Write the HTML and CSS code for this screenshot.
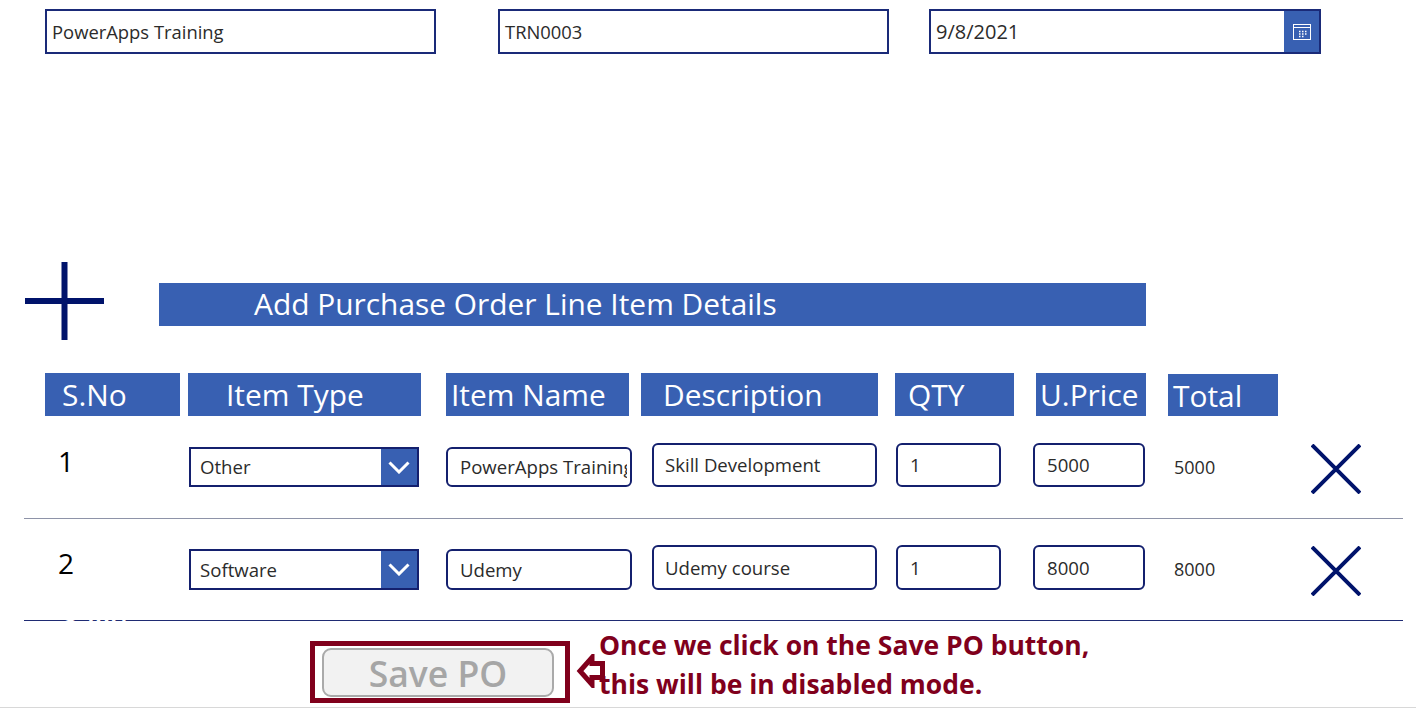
FILE: index.html
```html
<!DOCTYPE html>
<html lang="en">
<head>
<meta charset="UTF-8" />
<title>Purchase Order</title>
<link rel="stylesheet" href="styles.css">
</head>
<body>

<div class="top-row">
  <div class="field field-name">PowerApps Training</div>
  <div class="field field-code">TRN0003</div>
  <div class="field field-date">
    <span class="field-text">9/8/2021</span>
    <span class="date-btn">
      <svg width="18" height="16" viewBox="0 0 18 16" fill="none" stroke="#fff" stroke-width="1">
        <rect x="0.5" y="0.5" width="17" height="15" />
        <path d="M1 3.500h16" />
        <path stroke-width="1.500" d="M6 7.500h1.500M9 7.500h1.500M12 7.500h1.500M6 10h1.500M9 10h1.500M12 10h1.500M6 12.500h1.500M9 12.500h1.500" />
      </svg>
    </span>
  </div>
</div>

<div class="add-row">
  <svg class="plus" width="79" height="78" viewBox="0 0 79 78" fill="none" stroke="#00136b" stroke-width="6">
    <path d="M39.500 0v78M0 39h79" />
  </svg>
  <div class="add-title">Add Purchase Order Line Item Details</div>
</div>

<div class="head-row">
  <div class="head h-sno">S.No</div>
  <div class="head h-type">Item Type</div>
  <div class="head h-name">Item Name</div>
  <div class="head h-desc">Description</div>
  <div class="head h-qty">QTY</div>
  <div class="head h-price">U.Price</div>
  <div class="head h-total">Total</div>
</div>

<div class="line-row first">
  <div class="sno">1</div>
  <div class="select"><span class="select-text">Other</span><span class="select-btn"><svg width="22" height="13" viewBox="0 0 22 13" fill="none" stroke="#fff" stroke-width="3"><path d="M1.500 1.500l9.500 9.500 9.500-9.500" /></svg></span></div>
  <div class="input in-name"><span class="clip">PowerApps Training</span></div>
  <div class="input in-desc">Skill Development</div>
  <div class="input in-qty">1</div>
  <div class="input in-price">5000</div>
  <div class="total">5000</div>
  <svg class="remove" width="50" height="50" viewBox="0 0 50 50" fill="none" stroke="#00136b" stroke-width="4"><path d="M1 1l48 48M49 1L1 49" /></svg>
</div>

<div class="line-row second">
  <div class="sno">2</div>
  <div class="select"><span class="select-text">Software</span><span class="select-btn"><svg width="22" height="13" viewBox="0 0 22 13" fill="none" stroke="#fff" stroke-width="3"><path d="M1.500 1.500l9.500 9.500 9.500-9.500" /></svg></span></div>
  <div class="input in-name"><span class="clip">Udemy</span></div>
  <div class="input in-desc">Udemy course</div>
  <div class="input in-qty">1</div>
  <div class="input in-price">8000</div>
  <div class="total">8000</div>
  <svg class="remove" width="50" height="50" viewBox="0 0 50 50" fill="none" stroke="#00136b" stroke-width="4"><path d="M1 1l48 48M49 1L1 49" /></svg>
  <span class="ghost">Save</span>
</div>

<div class="save-row">
  <div class="save-box"><button class="save-btn" type="button" disabled>Save PO</button></div>
  <svg class="arrow" width="29" height="34" viewBox="0 0 29 34" fill="none" stroke="#80001c" stroke-width="5"><path d="M26.500 9.500H16V3.500L4 17l12 13.500V23.500h10.500z" /></svg>
  <p class="note">Once we click on the Save PO button,<br>this will be in disabled mode.</p>
</div>

</body>
</html>
```

FILE: styles.css
```css
html, body {
  height: 708px;
  overflow: hidden;
}

body {
  margin: 0;
  background-color: #fff;
  font-family: "Open Sans", sans-serif;
  color: #2b2b2b;
  box-sizing: border-box;
  border-bottom: 1px solid #d8d8d8;
}

/* top fields */
.top-row {
  display: flex;
  padding: 9px 0 0 45px;
}

.field {
  box-sizing: border-box;
  height: 45px;
  width: 391px;
  border: 2px solid #1a2a78;
  padding-left: 5px;
  font-size: 18.4px;
  line-height: 41px;
  white-space: nowrap;
}

.field-code {
  margin-left: 62px;
}

.field-date {
  margin-left: 40px;
  width: 392px;
  display: flex;
  justify-content: space-between;
  font-size: 20px;
}

.date-btn {
  width: 35px;
  background-color: #3860b2;
  display: flex;
  align-items: center;
  justify-content: center;
}

/* add line item */
.add-row {
  display: flex;
  align-items: flex-start;
  margin-top: 208px;
  padding-left: 25px;
}

.add-title {
  box-sizing: border-box;
  width: 987px;
  height: 43px;
  margin: 21px 0 0 55px;
  padding-left: 95px;
  background-color: #3860b2;
  color: #fff;
  font-size: 29.9px;
  line-height: 41px;
}

/* table header */
.head-row {
  display: flex;
  margin-top: 33px;
  padding-left: 45px;
}

.head {
  box-sizing: border-box;
  height: 43px;
  background-color: #3860b2;
  color: #fff;
  font-size: 29.9px;
  line-height: 43px;
  white-space: nowrap;
}

.h-sno { width: 135px; padding-left: 17px; }
.h-type { width: 233px; margin-left: 8px; padding-left: 38px; }
.h-name { width: 183px; margin-left: 25px; padding-left: 5px; }
.h-desc { width: 237px; margin-left: 12px; padding-left: 22px; }
.h-qty { width: 119px; margin-left: 17px; padding-left: 13px; }
.h-price { width: 110px; margin-left: 22px; padding-left: 4px; }
.h-total { width: 110px; height: 42px; margin: 1px 0 0 22px; padding-left: 5px; }

/* line items */
.line-row {
  position: relative;
  box-sizing: border-box;
  display: flex;
  align-items: flex-start;
  margin: 0 13px 0 24px;
  border-bottom: 1px solid #8e93a8;
}

.line-row.first {
  height: 103px;
  padding-top: 27px;
}

.line-row.second {
  height: 102px;
  padding-top: 26px;
  border-bottom-color: #1f2b73;
}

.sno {
  width: 165px;
  padding: 0 0 0 34px;
  box-sizing: border-box;
  color: #000;
  font-size: 28px;
  line-height: 37px;
}

.select {
  box-sizing: border-box;
  display: flex;
  width: 230px;
  height: 41px;
  margin-top: 4px;
  border: 2px solid #14206e;
  font-size: 18.6px;
  line-height: 38px;
}

.first .select {
  height: 40px;
  line-height: 36px;
}

.select-text {
  flex: 1;
  padding-left: 9px;
}

.select-btn {
  width: 36px;
  background-color: #3860b2;
  display: flex;
  align-items: center;
  justify-content: center;
}

.input {
  box-sizing: border-box;
  height: 45px;
  border: 2px solid #14206e;
  border-radius: 6px;
  font-size: 18.6px;
  line-height: 42px;
  white-space: nowrap;
}

.first .input {
  height: 44px;
  line-height: 40px;
}

.line-row .in-name {
  width: 186px;
  height: 41px;
  margin: 4px 0 0 27px;
  padding: 0 3px 0 12px;
  line-height: 38px;
}

.first .in-name {
  height: 40px;
  line-height: 36px;
}

.clip {
  display: block;
  overflow: hidden;
}

.in-desc { width: 225px; margin-left: 20px; padding-left: 11px; }
.in-qty { width: 105px; margin-left: 19px; padding-left: 12px; }
.in-price { width: 112px; margin-left: 32px; padding-left: 12px; }

.total {
  width: 137px;
  margin-left: 29px;
  font-size: 18px;
  line-height: 49px;
}

.remove {
  margin-top: 1px;
}

.ghost {
  position: absolute;
  left: 38px;
  top: 83px;
  color: #fff;
  font-size: 29px;
  line-height: 36px;
  font-weight: 600;
}

/* save */
.save-row {
  display: flex;
  align-items: flex-start;
  padding: 20px 0 0 310px;
}

.save-box {
  box-sizing: border-box;
  width: 260px;
  height: 62px;
  border: 5px solid #80001c;
  padding: 2px 0 0 7px;
}

.save-btn {
  display: block;
  box-sizing: border-box;
  width: 232px;
  height: 49px;
  padding: 0;
  border: 2px solid #aaa;
  border-radius: 9px;
  background-color: #f2f2f2;
  color: #a6a6a6;
  font-family: "Open Sans", sans-serif;
  font-size: 35.5px;
  font-weight: 600;
  line-height: 47px;
}

.arrow {
  margin: 13px 0 0 6px;
}

.note {
  margin: -15px 0 0 -6px;
  color: #80001c;
  font-size: 26.5px;
  font-weight: 700;
  line-height: 39px;
  white-space: nowrap;
}
```
